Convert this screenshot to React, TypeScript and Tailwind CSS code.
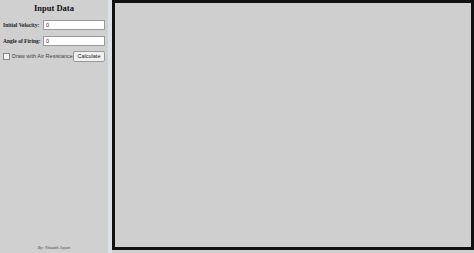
export default function App() {
  return (
    <div className="flex h-[253px] w-[474px] bg-[#cfcfcf] overflow-hidden">
      <div className="flex w-[108px] flex-col bg-[#d0d0d0] px-[3px]">
        <h1 className="mt-[3px] text-center text-[8.5px] font-bold leading-[10px] text-[#111] font-['Liberation_Serif',serif]">
          Input Data
        </h1>
        <div className="mt-[7px] flex items-center justify-between">
          <label className="text-[5.5px] font-bold text-[#222] font-['Liberation_Serif',serif]">Initial Velocity:</label>
          <input
            defaultValue="0"
            className="h-[10px] w-[62px] border border-[#999] bg-white px-[2px] text-[5.5px] leading-none text-[#222] outline-none font-['Liberation_Sans',sans-serif]"
          />
        </div>
        <div className="mt-[6px] flex items-center justify-between">
          <label className="text-[5.5px] font-bold text-[#222] font-['Liberation_Serif',serif]">Angle of Firing:</label>
          <input
            defaultValue="0"
            className="h-[10px] w-[62px] border border-[#999] bg-white px-[2px] text-[5.5px] leading-none text-[#222] outline-none font-['Liberation_Sans',sans-serif]"
          />
        </div>
        <div className="mt-[5px] flex items-center justify-between">
          <div className="flex items-center gap-[2px]">
            <span className="block h-[7px] w-[7px] border border-[#888] bg-[#f4f4f4]" />
            <span className="text-[5.5px] text-[#444] font-['Liberation_Sans',sans-serif]">Draw with Air Resistance</span>
          </div>
          <button className="h-[11px] w-[32px] rounded-[2px] border border-[#999] bg-[#f0f0f0] text-[5.5px] text-[#222] font-['Liberation_Sans',sans-serif]">
            Calculate
          </button>
        </div>
        <div className="mt-auto mb-[1px] text-center text-[4.5px] italic text-[#444] font-['Liberation_Serif',serif]">
          By: Vineeth Jayan
        </div>
      </div>
      <div className="w-[4px] bg-[#dde0e4]" />
      <div className="flex flex-1 flex-col">
        <div className="h-[250px] border-[3px] border-[#111] bg-[#cfcfcf]" />
      </div>
    </div>
  );
}
